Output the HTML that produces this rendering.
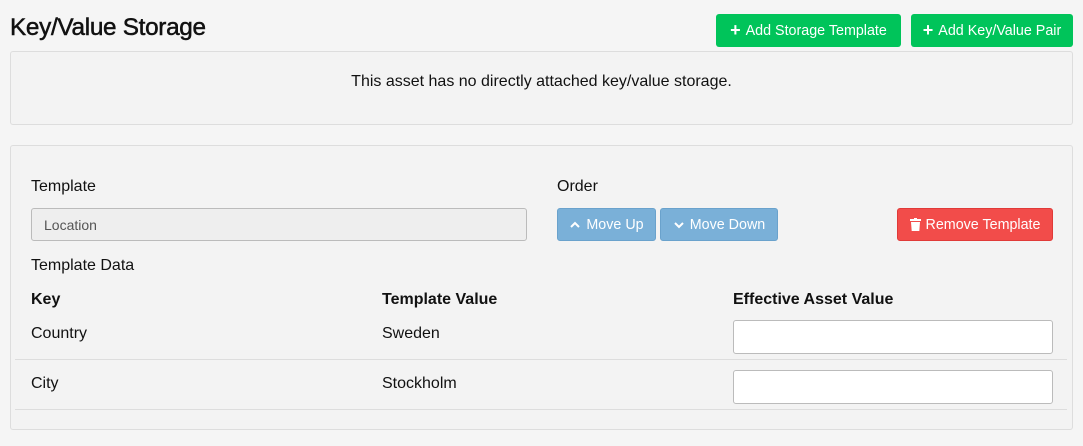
<!DOCTYPE html>
<html><head><style>
*{box-sizing:border-box;margin:0;padding:0}
body{width:1083px;height:446px;background:#f5f5f5;font-family:"Liberation Sans",sans-serif;font-size:16px;color:#111;position:relative;overflow:hidden}
.a{position:absolute}
h1{position:absolute;left:10px;top:14px;font-size:24.3px;font-weight:normal;letter-spacing:-0.3px;color:#111;-webkit-text-stroke:0.5px #111}
.btn{position:absolute;height:33px;border-radius:3px;color:#fff;font-size:14.3px;display:flex;align-items:center;justify-content:center;gap:5px}
.g{background:#00c45a}
.b{background:#7ab0d8;border:1px solid #6aa2cc}
.r{background:#f24c4a;border:1px solid #e03a38}
.panel{position:absolute;left:10px;width:1063px;background:#f3f3f3;border:1px solid #ddd;border-radius:3px}
.inp{position:absolute;background:#fff;border:1px solid #bbb;border-radius:3px}
.line{position:absolute;left:15px;width:1052px;height:1px;background:#ddd}
b{font-weight:bold}
</style></head><body>
<h1>Key/Value Storage</h1>
<div class="btn g" style="left:716px;top:14px;width:185px"><b style="font-size:18px">+</b>Add Storage Template</div>
<div class="btn g" style="left:911px;top:14px;width:162px"><b style="font-size:18px">+</b>Add Key/Value Pair</div>
<div class="panel" style="top:51px;height:74px"></div>
<div class="a" style="left:0;width:1083px;top:73px;text-align:center">This asset has no directly attached key/value storage.</div>
<div class="panel" style="top:145px;height:285px"></div>
<div class="a" style="left:31px;top:178px">Template</div>
<div class="a" style="left:557px;top:178px">Order</div>
<div class="inp" style="left:31px;top:208px;width:496px;height:33px;background:#eee;color:#555;padding:8px 12px;font-size:14px">Location</div>
<div class="btn b" style="left:557px;top:208px;width:99px"><svg width="12" height="10" viewBox="0 0 12 10"><path d="M2 7L6 3L10 7" stroke="#fff" stroke-width="2" fill="none"/></svg>Move Up</div>
<div class="btn b" style="left:660px;top:208px;width:118px"><svg width="12" height="10" viewBox="0 0 12 10"><path d="M2 3L6 7L10 3" stroke="#fff" stroke-width="2" fill="none"/></svg>Move Down</div>
<div class="btn r" style="left:897px;top:208px;width:156px"><svg width="11" height="13" viewBox="0 0 11 13"><rect x="0" y="1" width="11" height="2" fill="#fff"/><rect x="4" y="0" width="3" height="2" fill="#fff"/><path d="M1 4H10L9.3 13H1.7Z" fill="#fff"/></svg>Remove Template</div>
<div class="a" style="left:31px;top:257px">Template Data</div>
<div class="a" style="left:31px;top:291px"><b>Key</b></div>
<div class="a" style="left:382px;top:291px"><b>Template Value</b></div>
<div class="a" style="left:733px;top:291px"><b>Effective Asset Value</b></div>
<div class="a" style="left:31px;top:325px">Country</div>
<div class="a" style="left:382px;top:325px">Sweden</div>
<div class="inp" style="left:733px;top:320px;width:320px;height:34px"></div>
<div class="line" style="top:359px"></div>
<div class="a" style="left:31px;top:375px">City</div>
<div class="a" style="left:382px;top:375px">Stockholm</div>
<div class="inp" style="left:733px;top:370px;width:320px;height:34px"></div>
<div class="line" style="top:409px"></div>
</body></html>
